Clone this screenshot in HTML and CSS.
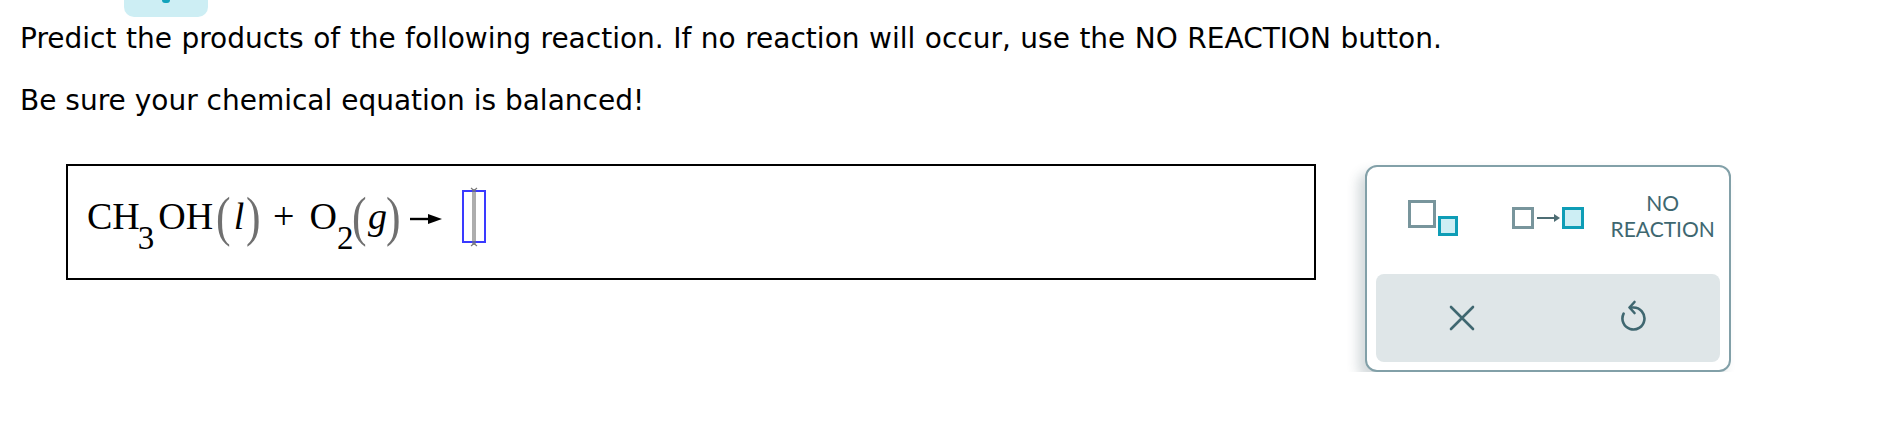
FILE: index.html
```html
<!DOCTYPE html>
<html lang="en">
<head>
<meta charset="utf-8">
<title>Reaction products</title>
<link rel="stylesheet" href="styles.css">
</head>
<body>
<div class="tab"><span class="tab-caret"></span></div>
<p class="prompt first">Predict the products of the following reaction. If no reaction will occur, use the NO REACTION button.</p>
<p class="prompt second">Be sure your chemical equation is balanced!</p>

<div class="workspace">
  <div class="equation">
    <span class="el">CH</span><span class="sub sub-3">3</span><span class="el">OH</span><span class="paren open">(</span><span class="state state-l">l</span><span class="paren">)</span><span class="op">+</span><span class="el">O</span><span class="sub sub-2">2</span><span class="paren open-g">(</span><span class="state state-g">g</span><span class="paren">)</span><svg class="yields" width="32" height="12" viewBox="0 0 32 12"><path d="M0 6H20" stroke="#000" stroke-width="2.4"/><path d="M18 1L32 6L18 11Z" fill="#000"/></svg><svg class="slot" width="26" height="60" viewBox="0 0 26 60"><rect x="2" y="4" width="22" height="51" fill="none" stroke="#3a3aff" stroke-width="2"/><path d="M12 2V58M14 2V58" stroke="#777" stroke-width="1.2"/><path d="M10 1L13 3.5L16 1M10 59L13 56.5L16 59" fill="none" stroke="#777" stroke-width="1.1"/></svg>
  </div>

  <div class="panel">
    <div class="tools">
      <button class="tool" type="button" aria-label="Subscript">
        <svg width="50" height="36" viewBox="0 0 50 36">
          <rect x="1.5" y="1.5" width="25" height="25" fill="none" stroke="#78959c" stroke-width="3"/>
          <rect x="31.5" y="17.5" width="17" height="17" fill="#cdeef4" stroke="#0e9db6" stroke-width="3"/>
        </svg>
      </button>
      <button class="tool" type="button" aria-label="Reaction arrow">
        <svg width="72" height="22" viewBox="0 0 72 22">
          <rect x="1.5" y="1.5" width="19" height="19" fill="none" stroke="#78959c" stroke-width="3"/>
          <path d="M25 11H44" stroke="#4e6d74" stroke-width="2"/>
          <path d="M42 7L48 11L42 15Z" fill="#4e6d74"/>
          <rect x="51.5" y="1.5" width="19" height="19" fill="#cdeef4" stroke="#0e9db6" stroke-width="3"/>
        </svg>
      </button>
      <button class="tool tool-text" type="button">NO<br>REACTION</button>
    </div>
    <div class="actions">
      <button class="tool" type="button" aria-label="Clear">
        <svg width="26" height="26" viewBox="0 0 26 26">
          <path d="M2 2L24 24M24 2L2 24" stroke="#3f6770" stroke-width="2.6" stroke-linecap="round"/>
        </svg>
      </button>
      <button class="tool" type="button" aria-label="Undo">
        <svg class="undo" width="28" height="34" viewBox="0 0 28 34">
          <path d="M10 9.5H13.5A11 11 0 1 1 3.6 15.6" fill="none" stroke="#3f6770" stroke-width="2.6" stroke-linecap="round"/>
          <path d="M14.5 4L9.5 9.5L14.5 15" fill="none" stroke="#3f6770" stroke-width="2.6" stroke-linecap="round" stroke-linejoin="round"/>
        </svg>
      </button>
    </div>
  </div>
</div>
</body>
</html>
```

FILE: styles.css
```css
* {
  box-sizing: border-box;
}

body {
  margin: 0;
  background: #fff;
  color: #000;
  font-family: "DejaVu Sans", Verdana, sans-serif;
}

/* collapsed toolbar handle at the very top */
.tab {
  width: 84px;
  height: 17px;
  margin-left: 124px;
  background: #cdeef4;
  border-radius: 0 0 10px 10px;
  display: flex;
  justify-content: center;
}

.tab-caret {
  width: 8px;
  height: 3px;
  background: #12a3bb;
  border-radius: 0 0 4px 4px;
}

.prompt {
  margin: 0 0 0 20px;
  font-size: 28px;
  line-height: 32px;
}

.first {
  margin-top: 6px;
  word-spacing: 0.6px;
}

.second {
  margin-top: 30px;
}

.workspace {
  display: flex;
  align-items: flex-start;
  gap: 49px;
  margin: 47px 0 0 66px;
}

/* equation entry field */
.equation {
  flex: none;
  width: 1250px;
  height: 116px;
  border: 2px solid #000;
  padding-left: 19px;
  font-family: "Liberation Serif", "Times New Roman", serif;
  font-size: 38px;
  line-height: 100px;
  white-space: nowrap;
}

.sub {
  font-size: 33px;
  line-height: 0;
  vertical-align: -20px;
}

.sub-3 {
  margin-left: -2px;
  margin-right: 4px;
}

.paren {
  display: inline-block;
  line-height: 38px;
  color: #707070;
  transform: scale(1.15, 1.45);
}

.open {
  margin-left: 4px;
}

.open-g {
  margin-left: 0;
}

.state {
  font-style: italic;
}

.state-l {
  margin: 0 3px 0 4px;
}

.state-g {
  margin: 0 0 0 2px;
}

.op {
  margin: 0 15px 0 13px;
}

.yields {
  margin-left: 10px;
  vertical-align: 4px;
}

.slot {
  margin-left: 19px;
  vertical-align: -18px;
}

/* tool palette */
.panel {
  flex: none;
  width: 366px;
  height: 207px;
  margin-top: 1px;
  border: 2px solid #82a0a8;
  border-radius: 12px;
  padding: 0 9px 8px;
  background: #fff;
  display: flex;
  flex-direction: column;
  box-shadow: -7px 7px 12px rgba(40, 70, 80, 0.2);
}

.tools {
  height: 107px;
  padding-bottom: 5px;
  display: grid;
  grid-template-columns: repeat(3, 1fr);
  align-items: center;
  justify-items: center;
}

.tool {
  border: 0;
  padding: 0;
  margin: 0;
  background: none;
  display: flex;
  align-items: center;
  justify-content: center;
  cursor: pointer;
}

.tool svg {
  display: block;
}

.tool-text {
  margin-bottom: 5px;
  font-family: Lato, "Open Sans", sans-serif;
  font-size: 21px;
  line-height: 26px;
  color: #3e6770;
  text-align: center;
}

.actions {
  flex: 1;
  background: #dfe6e8;
  border-radius: 8px;
  display: grid;
  grid-template-columns: 1fr 1fr;
  align-items: center;
  justify-items: center;
}

.undo {
  transform: translateY(-3px);
}
```
